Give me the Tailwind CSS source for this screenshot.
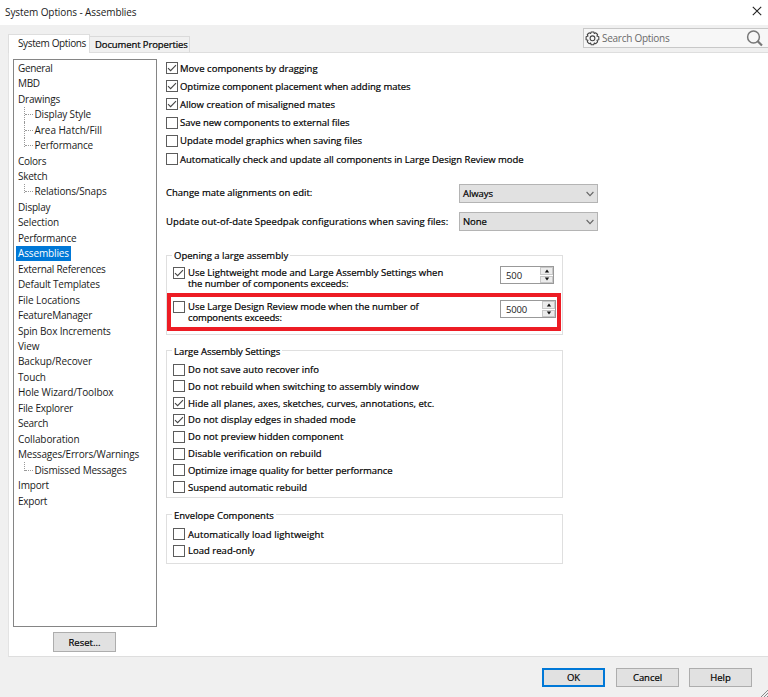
<!DOCTYPE html>
<html lang="en">
<head>
<meta charset="utf-8">
<title>System Options - Assemblies</title>
<script src="https://cdn.jsdelivr.net/npm/@tailwindcss/browser@4"></script>
</head>
<body class="bg-[#f0f0f0]">
<svg class="hidden">
  <symbol id="off" viewBox="0 0 12 12"><rect x=".5" y=".5" width="11" height="11" fill="#fff" stroke="#5c5c5c"/></symbol>
  <symbol id="on" viewBox="0 0 12 12"><rect x=".5" y=".5" width="11" height="11" fill="#fff" stroke="#5c5c5c"/><path d="M2 6.2 4.6 8.7 10 3.2" fill="none" stroke="#444" stroke-width="1.1"/></symbol>
  <symbol id="chev" viewBox="0 0 8 6"><path d="M.6 1 4 4.6 7.4 1" fill="none" stroke="#666" stroke-width="1.1"/></symbol>
  <symbol id="up" viewBox="0 0 6 4"><path d="M.8 3.5 3 .6 5.2 3.5z" fill="#111"/></symbol>
  <symbol id="down" viewBox="0 0 6 4"><path d="M.8.5 3 3.4 5.2.5z" fill="#111"/></symbol>
</svg>
<div class="flex h-[697px] w-[768px] flex-col overflow-hidden bg-[#f0f0f0] font-['Open_Sans','Noto_Sans',sans-serif] text-[10px] leading-[11px] whitespace-nowrap text-[#1a1a1a]">
  <header class="flex h-[25px] shrink-0 items-center justify-between bg-white pr-[6px] pl-[5px]">
    <h1 class="tracking-[-0.088px]">System Options - Assemblies</h1>
    <svg class="mt-[-3px] size-[10px]" viewBox="0 0 10 10"><path d="M.8.8 9.2 9.2M9.2.8.8 9.2" stroke="#222" stroke-width="1.1"/></svg>
  </header>

  <div class="flex h-[27px] shrink-0 items-end pl-[8px]">
    <div class="z-10 mb-[-1px] flex h-[19px] w-[82px] items-center border border-b-0 border-[#dedede] bg-white pb-[2px] pl-[9px] tracking-[-0.371px]">System Options</div>
    <div class="flex h-[16px] w-[100px] items-center border border-b-0 border-l-0 border-[#dadada] pl-[5px] text-[9.5px] tracking-[-0.11px] text-black [-webkit-text-stroke:0.2px]">Document Properties</div>
    <div class="mb-[4px] ml-auto flex h-[20px] w-[185px] items-center border border-r-0 border-[#c8c8c8] bg-[#f7f7f7] pl-px text-[#6a6a6a]">
      <svg class="size-[15px] shrink-0" viewBox="0 0 15 15" fill="none" stroke="#444" stroke-width="1.1"><path d="M6.200 1h2.600l.5 1.500 1.500-.7 1.800 1.700-.7 1.600 1.900.7v2.900l-1.800.6.6 1.600-1.800 1.800-1.500-.7-.6 1.800H6.200l-.6-1.800-1.500.7-1.800-1.800.6-1.600-1.800-.6V5.800l1.900-.7-.7-1.600L4.100 1.800l1.500.7z" stroke-linejoin="round"/><circle cx="7.5" cy="7.3" r="2.4"/></svg>
      <span class="ml-[2px] tracking-[-0.262px]">Search Options</span>
      <svg class="mr-[5px] ml-auto size-[17px]" viewBox="0 0 17 17" fill="none" stroke="#777"><circle cx="7.5" cy="7" r="5.900" stroke-width="1.5"/><path d="M11.500 11 16 15.500" stroke-width="2.2"/></svg>
    </div>
  </div>

  <main class="ml-[8px] flex h-[605px] shrink-0 border-y border-l border-y-[#dedede] border-l-[#e3e3e3] bg-white">
    <div class="ml-[4px] flex w-[144px] shrink-0 flex-col pt-[6px]">
      <nav class="flex h-[568px] w-full flex-col border border-[#858585] pt-[0.6px] pl-[4px] *:flex *:h-[15.46px] *:shrink-0 *:items-center">
        <div class="tracking-[-0.329px]">General</div>
        <div class="tracking-[-0.3px]">MBD</div>
        <div class="tracking-[-0.188px]">Drawings</div>
        <div class="tracking-[-0.158px]"><i class="ml-[6px] h-full w-px border-l border-dotted border-[#999]"></i><i class="mr-[2px] w-[7.5px] border-t border-dotted border-[#999]"></i>Display Style</div>
        <div class="tracking-[-0.033px]"><i class="ml-[6px] h-full w-px border-l border-dotted border-[#999]"></i><i class="mr-[2px] w-[7.5px] border-t border-dotted border-[#999]"></i>Area Hatch/Fill</div>
        <div class="tracking-[-0.185px]"><i class="mb-[7px] ml-[6px] h-[9px] w-px border-l border-dotted border-[#999]"></i><i class="mr-[2px] w-[7.5px] border-t border-dotted border-[#999]"></i>Performance</div>
        <div class="tracking-[-0.25px]">Colors</div>
        <div class="tracking-[-0.25px]">Sketch</div>
        <div class="tracking-[-0.173px]"><i class="mb-[7px] ml-[6px] h-[9px] w-px border-l border-dotted border-[#999]"></i><i class="mr-[2px] w-[7.5px] border-t border-dotted border-[#999]"></i>Relations/Snaps</div>
        <div class="tracking-[-0.2px]">Display</div>
        <div class="tracking-[-0.141px]">Selection</div>
        <div class="tracking-[-0.185px]">Performance</div>
        <div class="tracking-[-0.128px]"><span class="-ml-[2px] flex h-[15px] w-[55px] items-center bg-[#0078d7] pl-[2px] text-white">Assemblies</span></div>
        <div class="tracking-[-0.271px]">External References</div>
        <div class="tracking-[-0.202px]">Default Templates</div>
        <div class="tracking-[-0.072px]">File Locations</div>
        <div class="tracking-[-0.222px]">FeatureManager</div>
        <div class="tracking-[-0.169px]">Spin Box Increments</div>
        <div class="tracking-[-0.1px]">View</div>
        <div class="tracking-[-0.091px]">Backup/Recover</div>
        <div class="tracking-[-0.15px]">Touch</div>
        <div class="tracking-[-0.102px]">Hole Wizard/Toolbox</div>
        <div class="tracking-[-0.205px]">File Explorer</div>
        <div class="tracking-[-0.278px]">Search</div>
        <div class="tracking-[-0.11px]">Collaboration</div>
        <div class="tracking-[-0.179px]">Messages/Errors/Warnings</div>
        <div class="tracking-[-0.205px]"><i class="mb-[7px] ml-[6px] h-[9px] w-px border-l border-dotted border-[#999]"></i><i class="mr-[2px] w-[7.5px] border-t border-dotted border-[#999]"></i>Dismissed Messages</div>
        <div class="tracking-[-0.15px]">Import</div>
        <div class="tracking-[-0.25px]">Export</div>
      </nav>
      <button class="mt-[5px] ml-[40px] h-[20px] w-[63px] border border-[#adadad] bg-[#e1e1e1] text-[9.5px] tracking-[0.02px] text-black [-webkit-text-stroke:0.2px]">Reset...</button>
    </div>

    <section class="ml-[9px] flex w-[432px] flex-col pt-[6px] text-[9.5px] text-black [-webkit-text-stroke:0.2px]">
      <div class="flex flex-col *:flex *:h-[18.2px] *:items-center *:gap-[2px]">
        <label class="tracking-[0.045px]"><svg class="size-[12px]"><use href="#on"/></svg>Move components by dragging</label>
        <label class="tracking-[-0.03px]"><svg class="size-[12px]"><use href="#on"/></svg>Optimize component placement when adding mates</label>
        <label class="tracking-[0.02px]"><svg class="size-[12px]"><use href="#on"/></svg>Allow creation of misaligned mates</label>
        <label class="tracking-[-0.02px]"><svg class="size-[12px]"><use href="#off"/></svg>Save new components to external files</label>
        <label class="tracking-[0.04px]"><svg class="size-[12px]"><use href="#off"/></svg>Update model graphics when saving files</label>
        <label class="tracking-[0px]"><svg class="size-[12px]"><use href="#off"/></svg>Automatically check and update all components in Large Design Review mode</label>
      </div>

      <div class="mt-[16px] flex h-[19px] items-center justify-between">
        <span class="pb-[2px] tracking-[0.01px]">Change mate alignments on edit:</span>
        <div class="flex h-[19px] w-[139px] items-center justify-between border border-[#b4b4b4] bg-[#e1e1e1] pr-[3px] pl-[3px] tracking-[-0.05px]">Always<svg class="h-[6px] w-[8px]"><use href="#chev"/></svg></div>
      </div>
      <div class="mt-[9px] flex h-[19px] items-center justify-between">
        <span class="tracking-[0.085px]">Update out-of-date Speedpak configurations when saving files:</span>
        <div class="flex h-[19px] w-[139px] items-center justify-between border border-[#b4b4b4] bg-[#e1e1e1] pr-[3px] pl-[3px] tracking-[-0.05px]">None<svg class="h-[6px] w-[8px]"><use href="#chev"/></svg></div>
      </div>

      <div class="mt-[24px] h-[80px] w-[397px] border border-[#dfdfdf]">
        <h2 class="-mt-[6px] ml-[5px] w-fit bg-white px-[2px] tracking-[0.01px]">Opening a large assembly</h2>
        <div class="mt-[6px] ml-[6px] flex h-[26px]">
          <svg class="size-[12px]"><use href="#on"/></svg>
          <p class="ml-[3px] w-[312px] tracking-[0.02px]">Use Lightweight mode and Large Assembly Settings when<br><span class="tracking-[-0.07px]">the number of components exceeds:</span></p>
          <div class="-mt-px flex h-[18px] w-[54px] border border-[#999] bg-white tracking-[-0.1px] text-[#222] [-webkit-text-stroke:0px]">
            <span class="grow pt-[3px] pl-[5px]">500</span>
            <span class="flex w-[13px] flex-col gap-px *:flex *:flex-1 *:items-center *:justify-center *:border *:border-[#c8c8c8] *:bg-[#ececec]"><b><svg class="h-[4px] w-[6px]"><use href="#up"/></svg></b><b><svg class="h-[4px] w-[6px]"><use href="#down"/></svg></b></span>
          </div>
        </div>
        <div class="flex h-[38px] w-[394px] border-4 border-[#ed1c24] pt-[4px] pl-[2px]">
          <svg class="size-[12px]"><use href="#off"/></svg>
          <p class="ml-[3px] w-[312px] tracking-[-0.01px]">Use Large Design Review mode when the number of<br><span class="tracking-[-0.13px]">components exceeds:</span></p>
          <div class="-mt-px flex h-[18px] w-[56px] border border-[#999] bg-white tracking-[-0.15px] text-[#222] [-webkit-text-stroke:0px]">
            <span class="grow pt-[3px] pl-[5px]">5000</span>
            <span class="flex w-[13px] flex-col gap-px *:flex *:flex-1 *:items-center *:justify-center *:border *:border-[#c8c8c8] *:bg-[#ececec]"><b><svg class="h-[4px] w-[6px]"><use href="#up"/></svg></b><b><svg class="h-[4px] w-[6px]"><use href="#down"/></svg></b></span>
          </div>
        </div>
      </div>

      <div class="mt-[15px] h-[148px] w-[397px] border border-[#dfdfdf]">
        <h2 class="-mt-[5px] ml-[5px] w-fit bg-white px-[2px] tracking-[-0.03px]">Large Assembly Settings</h2>
        <div class="mt-[4px] ml-[6px] flex flex-col *:flex *:h-[16.8px] *:items-center *:gap-[3px]">
          <label class="tracking-[0.015px]"><svg class="size-[12px]"><use href="#off"/></svg>Do not save auto recover info</label>
          <label class="tracking-[0.08px]"><svg class="size-[12px]"><use href="#off"/></svg>Do not rebuild when switching to assembly window</label>
          <label class="tracking-[0.01px]"><svg class="size-[12px]"><use href="#on"/></svg>Hide all planes, axes, sketches, curves, annotations, etc.</label>
          <label class="tracking-[0.045px]"><svg class="size-[12px]"><use href="#on"/></svg>Do not display edges in shaded mode</label>
          <label class="tracking-[0.035px]"><svg class="size-[12px]"><use href="#off"/></svg>Do not preview hidden component</label>
          <label class="tracking-[0.05px]"><svg class="size-[12px]"><use href="#off"/></svg>Disable verification on rebuild</label>
          <label class="tracking-[-0.045px]"><svg class="size-[12px]"><use href="#off"/></svg>Optimize image quality for better performance</label>
          <label class="tracking-[-0.01px]"><svg class="size-[12px]"><use href="#off"/></svg>Suspend automatic rebuild</label>
        </div>
      </div>

      <div class="mt-[16px] h-[50px] w-[397px] border border-[#dfdfdf]">
        <h2 class="-mt-[5px] ml-[5px] w-fit bg-white px-[2px] tracking-[0px]">Envelope Components</h2>
        <div class="mt-[5px] ml-[6px] flex flex-col *:flex *:h-[16.5px] *:items-center *:gap-[3px]">
          <label class="tracking-[0.1px]"><svg class="size-[12px]"><use href="#off"/></svg>Automatically load lightweight</label>
          <label class="tracking-[0.02px]"><svg class="size-[12px]"><use href="#off"/></svg>Load read-only</label>
        </div>
      </div>
    </section>
  </main>

  <footer class="relative flex grow items-start justify-end gap-[10px] pt-[11px] pr-[16px] text-[9.5px] text-black [-webkit-text-stroke:0.2px] *:h-[19px] *:w-[63px]">
    <button class="mr-px border-2 border-[#0078d7] bg-[#e1e1e1] tracking-[-0.2px]">OK</button>
    <button class="border border-[#adadad] bg-[#e1e1e1] tracking-[-0.05px]">Cancel</button>
    <button class="border border-[#adadad] bg-[#e1e1e1] tracking-[-0.03px]">Help</button>
    <svg class="absolute right-0 bottom-0 max-h-[7px] max-w-[7px]" viewBox="0 0 7 7"><path d="M0 7 7 0M3 7 7 3M6 7 7 6" stroke="#888"/></svg>
  </footer>
</div>
</body>
</html>
